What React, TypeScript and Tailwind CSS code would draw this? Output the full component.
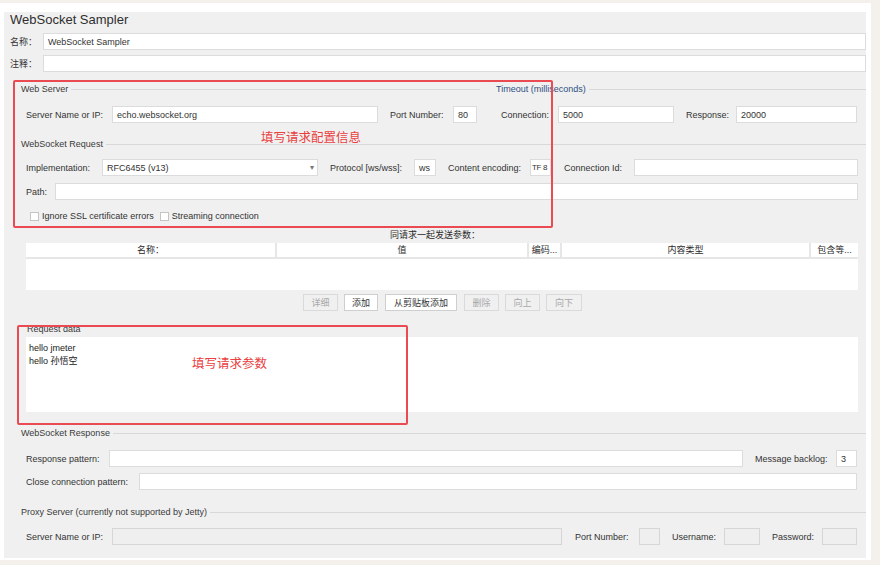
import * as React from "react";

// JMeter WebSocket Sampler panel, annotated screenshot

function Field({
  w,
  value,
  disabled,
  pad = "pl-[4px]",
}: {
  w: string;
  value?: string;
  disabled?: boolean;
  pad?: string;
}) {
  return (
    <div
      className={
        "h-[17px] flex items-center border overflow-hidden whitespace-nowrap " +
        (disabled ? "bg-[#efefef] border-[#d6d6d6] " : "bg-white border-[#dcdcdc] ") +
        pad +
        " " +
        w
      }
    >
      {value}
    </div>
  );
}

function Label({ w, children }: { w: string; children: React.ReactNode }) {
  return <div className={"shrink-0 whitespace-nowrap " + w}>{children}</div>;
}

function Legend({ children, tone = "text-[#3a3a3a]" }: { children: React.ReactNode; tone?: string }) {
  return (
    <div className="flex items-center flex-1">
      <span className={"whitespace-nowrap " + tone}>{children}</span>
      <div className="flex-1 h-px bg-[#d8d8d8] ml-[3px]" />
    </div>
  );
}

function Btn({ label, w, disabled }: { label: string; w: string; disabled?: boolean }) {
  return (
    <div
      className={
        "h-[17px] flex items-center justify-center border " +
        (disabled ? "bg-[#f0f0f0] border-[#dadada] text-[#a8a8a8] " : "bg-white border-[#cfcfcf] text-[#333] ") +
        w
      }
    >
      {label}
    </div>
  );
}

function Check({ label }: { label: string }) {
  return (
    <div className="flex items-center gap-[3px]">
      <div className="w-[9px] h-[9px] border border-[#c4c4c4] bg-white" />
      <span>{label}</span>
    </div>
  );
}

export default function App() {
  return (
    <div className="w-[880px] h-[565px] bg-[#f4f1ec] pt-[3px] overflow-hidden font-['Liberation_Sans','Noto_Sans_CJK_SC',sans-serif]">
      <div className="w-[871px] h-[557px] bg-white pt-[5px]">
        <div className="relative ml-[4px] w-[862px] h-[546px] bg-[#f0f0f0] text-[9px] leading-[12px] text-[#333]">
          {/* Title */}
          <div className="mt-[4px] pl-[6px] h-[16px] text-[13px] leading-[16px] text-[#2e2e2e]">WebSocket Sampler</div>

          {/* Name / comment */}
          <div className="mt-[5px] flex items-center pl-[6px]">
            <Label w="w-[33px]">名称：</Label>
            <Field w="flex-1" value="WebSocket Sampler" />
          </div>
          <div className="mt-[5px] flex items-center pl-[6px]">
            <Label w="w-[33px]">注释：</Label>
            <Field w="flex-1" />
          </div>

          {/* Web Server / Timeout legends */}
          <div className="mt-[11px] h-[12px] flex items-center pl-[17px]">
            <div className="w-[459px] flex">
              <Legend>Web Server</Legend>
            </div>
            <div className="ml-[16px] flex-1 flex">
              <Legend tone="text-[#2f4f7f]">Timeout (milliseconds)</Legend>
            </div>
          </div>

          {/* Server row */}
          <div className="mt-[11px] flex items-center pl-[22px]">
            <Label w="w-[86px]">Server Name or IP:</Label>
            <Field w="w-[266px]" value="echo.websocket.org" />
            <Label w="w-[75px] pl-[12px]">Port Number:</Label>
            <Field w="w-[24px]" value="80" />
            <Label w="w-[81px] pl-[24px]">Connection:</Label>
            <Field w="w-[116px]" value="5000" />
            <Label w="w-[62px] pl-[12px]">Response:</Label>
            <Field w="w-[121px]" value="20000" />
          </div>

          {/* WebSocket Request */}
          <div className="mt-[15px] h-[12px] flex items-center pl-[17px]">
            <Legend>WebSocket Request</Legend>
          </div>
          <div className="mt-[9px] flex items-center pl-[22px]">
            <Label w="w-[76px]">Implementation:</Label>
            <div className="w-[216px] h-[17px] flex items-center justify-between pl-[4px] pr-[3px] bg-white border border-[#dcdcdc]">
              <span>RFC6455 (v13)</span>
              <span className="text-[8px] text-[#777]">▾</span>
            </div>
            <Label w="w-[96px] pl-[12px]">Protocol [ws/wss]:</Label>
            <Field w="w-[22px]" value="ws" />
            <Label w="w-[94px] pl-[12px]">Content encoding:</Label>
            <Field w="w-[21px] text-[8px] tracking-[-0.3px]" pad="pl-[1px]" value="TF 8" />
            <Label w="w-[83px] pl-[13px]">Connection Id:</Label>
            <Field w="w-[224px]" />
          </div>
          <div className="mt-[7px] flex items-center pl-[22px] pr-[8px]">
            <Label w="w-[29px]">Path:</Label>
            <Field w="flex-1" />
          </div>
          <div className="mt-[10px] h-[12px] flex items-center pl-[26px] gap-[6px]">
            <Check label="Ignore SSL certificate errors" />
            <Check label="Streaming connection" />
          </div>

          {/* Parameters table */}
          <div className="mt-[7px] h-[12px] text-center text-[#2b2b2b]">同请求一起发送参数：</div>
          <div className="mt-[2px] ml-[22px] w-[832px]">
            <div className="h-[16px] flex bg-white border-b-2 border-[#e6e6e6] text-[#2b2b2b]">
              <div className="w-[251px] flex items-center justify-center border-r-2 border-[#e6e6e6]">名称：</div>
              <div className="w-[252px] flex items-center justify-center border-r-2 border-[#e6e6e6]">值</div>
              <div className="w-[33px] flex items-center justify-center border-r-2 border-[#e6e6e6]">编码...</div>
              <div className="w-[249px] flex items-center justify-center border-r-2 border-[#e6e6e6]">内容类型</div>
              <div className="flex-1 flex items-center justify-center">包含等...</div>
            </div>
            <div className="h-[31px] bg-white" />
          </div>
          <div className="mt-[4px] flex items-center pl-[299px]">
            <Btn label="详细" w="w-[35px]" disabled />
            <div className="ml-[6px]"><Btn label="添加" w="w-[34px]" /></div>
            <div className="ml-[7px]"><Btn label="从剪贴板添加" w="w-[72px]" /></div>
            <div className="ml-[7px]"><Btn label="删除" w="w-[35px]" disabled /></div>
            <div className="ml-[6px]"><Btn label="向上" w="w-[35px]" disabled /></div>
            <div className="ml-[6px]"><Btn label="向下" w="w-[36px]" disabled /></div>
          </div>

          {/* Request data */}
          <div className="mt-[12px] h-[12px] pl-[23px] text-[#3a3a3a]">Request data</div>
          <div className="mt-[2px] ml-[22px] w-[832px] h-[75px] bg-white pt-[5px] pl-[3px] leading-[13px] text-[#222]">
            <div>hello jmeter</div>
            <div>hello 孙悟空</div>
          </div>

          {/* WebSocket Response */}
          <div className="mt-[15px] h-[12px] flex items-center pl-[17px]">
            <Legend>WebSocket Response</Legend>
          </div>
          <div className="mt-[11px] flex items-center pl-[22px]">
            <Label w="w-[83px]">Response pattern:</Label>
            <Field w="w-[634px]" />
            <Label w="w-[93px] pl-[12px]">Message backlog:</Label>
            <Field w="w-[21px]" value="3" />
          </div>
          <div className="mt-[6px] flex items-center pl-[22px]">
            <Label w="w-[113px]">Close connection pattern:</Label>
            <Field w="w-[718px]" />
          </div>

          {/* Proxy */}
          <div className="mt-[16px] h-[12px] flex items-center pl-[17px]">
            <Legend>Proxy Server (currently not supported by Jetty)</Legend>
          </div>
          <div className="mt-[10px] flex items-center pl-[22px]">
            <Label w="w-[86px]">Server Name or IP:</Label>
            <Field w="w-[450px]" disabled />
            <Label w="w-[77px] pl-[13px]">Port Number:</Label>
            <Field w="w-[21px]" disabled />
            <Label w="w-[64px] pl-[12px]">Username:</Label>
            <Field w="w-[36px]" disabled />
            <Label w="w-[62px] pl-[12px]">Password:</Label>
            <Field w="w-[35px]" disabled />
          </div>

          {/* Annotations */}
          <div className="absolute left-[9px] top-[68px] w-[540px] h-[148px] border-2 border-[#ea4a51] rounded-[2px]" />
          <div className="absolute left-[257px] top-[119px] text-[12.5px] leading-[14px] text-[#e8413f]">填写请求配置信息</div>
          <div className="absolute left-[13px] top-[313px] w-[391px] h-[100px] border-2 border-[#ea4a51] rounded-[2px]" />
          <div className="absolute left-[188px] top-[345px] text-[12.5px] leading-[14px] text-[#e8413f]">填写请求参数</div>
        </div>
      </div>
    </div>
  );
}
